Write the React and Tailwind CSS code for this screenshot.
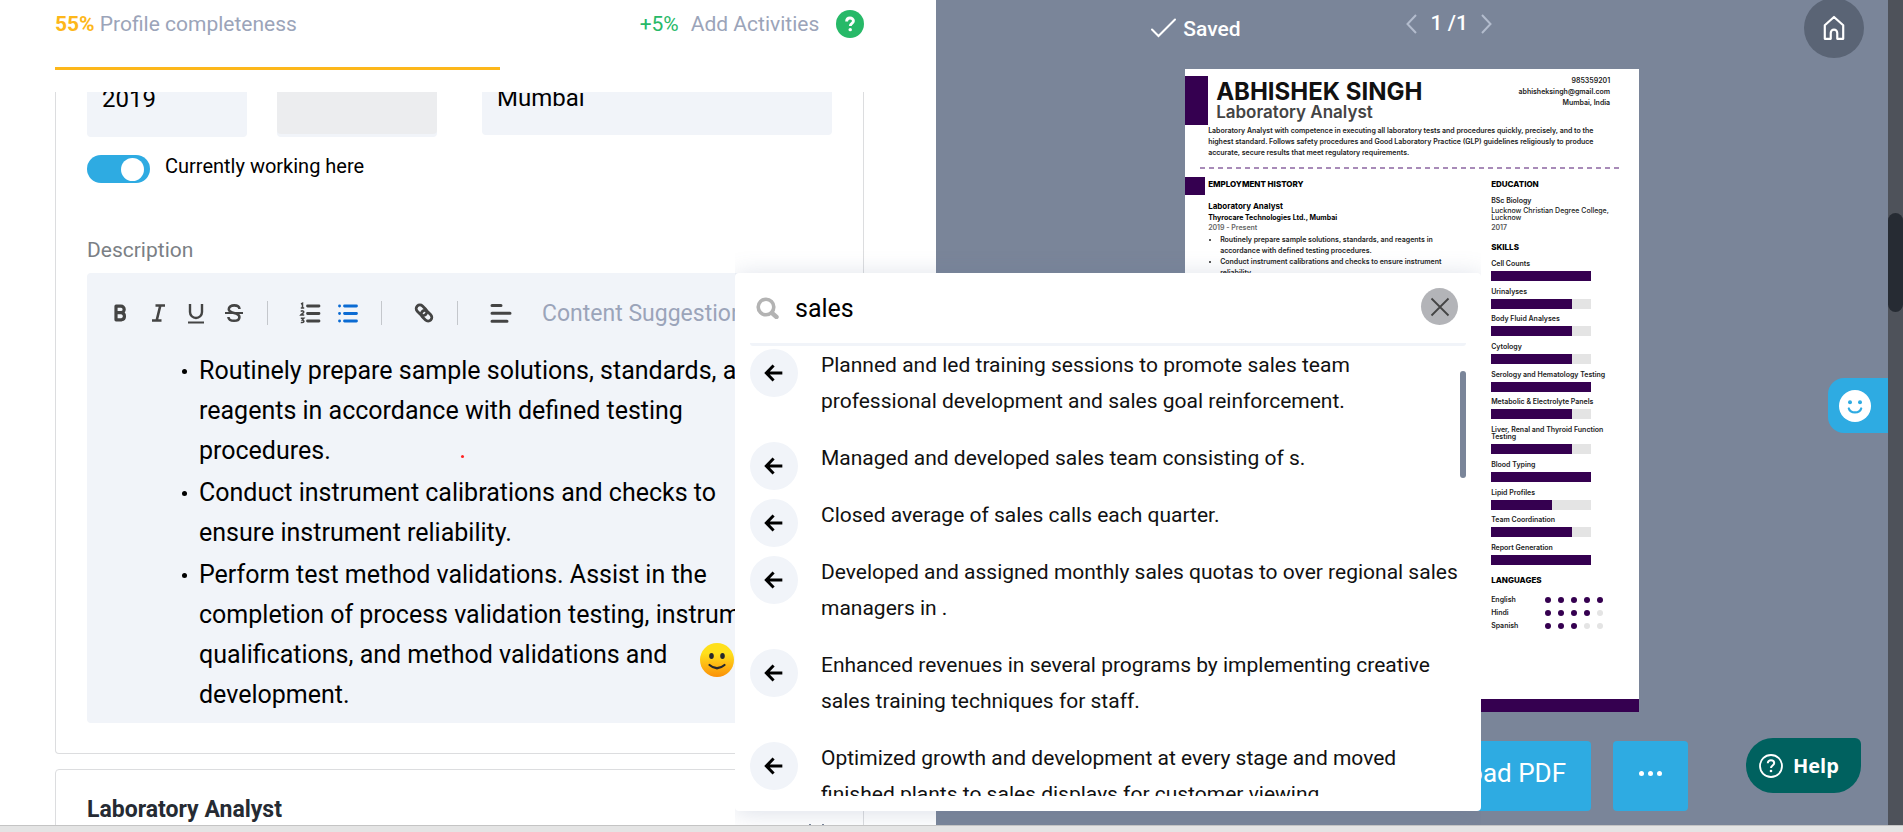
import { useState } from "react";

const skills = [
  { name: "Cell Counts", level: 100 },
  { name: "Urinalyses", level: 81 },
  { name: "Body Fluid Analyses", level: 81 },
  { name: "Cytology", level: 81 },
  { name: "Serology and Hematology Testing", level: 100 },
  { name: "Metabolic & Electrolyte Panels", level: 81 },
  { name: "Liver, Renal and Thyroid Function\nTesting", level: 81 },
  { name: "Blood Typing", level: 100 },
  { name: "Lipid Profiles", level: 61 },
  { name: "Team Coordination", level: 81 },
  { name: "Report Generation", level: 100 },
];

const languages = [
  { name: "English", dots: 5 },
  { name: "Hindi", dots: 4 },
  { name: "Spanish", dots: 3 },
];

const suggestions = [
  "Planned and led training sessions to promote sales team\nprofessional development and sales goal reinforcement.",
  "Managed and developed sales team consisting of s.",
  "Closed average of sales calls each quarter.",
  "Developed and assigned monthly sales quotas to over regional sales\nmanagers in .",
  "Enhanced revenues in several programs by implementing creative\nsales training techniques for staff.",
  "Optimized growth and development at every stage and moved\nfinished plants to sales displays for customer viewing.",
];

const duties = [
  "Routinely prepare sample solutions, standards, and\nreagents in accordance with defined testing\nprocedures.",
  "Conduct instrument calibrations and checks to\nensure instrument reliability.",
  "Perform test method validations. Assist in the\ncompletion of process validation testing, instrument\nqualifications, and method validations and\ndevelopment.",
];

const Icon = ({ size = 24, className = "", children, ...rest }) => (
  <svg width={size} height={size} viewBox="0 0 24 24" fill="none" stroke="currentColor" className={className} aria-hidden="true" {...rest}>
    {children}
  </svg>
);

const ToolButton = ({ label, active, children }) => (
  <button type="button" aria-label={label} className={`flex w-[38px] justify-center ${active ? "text-[#0b6bd3]" : "text-[#444]"}`}>
    <Icon>{children}</Icon>
  </button>
);

const Separator = () => <span className="ml-[14px] mr-[23px] h-6 w-px shrink-0 bg-[#c4c7cc]" />;

const Toolbar = () => (
  <div className="mt-7 flex h-6 items-center pl-[14px]">
    <ToolButton label="Bold">
      <path d="M8 5.200v13.600h5.600a3.700 3.700 0 0 0 0-7.200H8h5a3.200 3.200 0 0 0 0-6.400z" strokeWidth="3.200" strokeLinejoin="round" />
    </ToolButton>
    <ToolButton label="Italic">
      <path d="M9.500 4.500h9.500M6 19.500h9.500M14.200 5l-3.400 14" strokeWidth="2.600" />
    </ToolButton>
    <ToolButton label="Underline">
      <path d="M6 3v8a6 6 0 0 0 12 0v-8" strokeWidth="2.400" />
      <path d="M4 21.500h16" strokeWidth="1.800" />
    </ToolButton>
    <ToolButton label="Strike">
      <path d="M17.500 8c-.2-2.200-2.400-3.600-5.300-3.600S6.800 5.800 6.800 8.200c0 2.300 2.400 3 5.200 3.700s5.400 1.500 5.400 4-2.400 3.900-5.400 3.900-5.400-1.400-5.600-3.800" strokeWidth="2.600" />
      <path d="M3 12h18" strokeWidth="1.800" />
    </ToolButton>
    <Separator />
    <ToolButton label="Numbered list">
      <path d="M9.500 5h11.500M9.500 12.500h11.500M9.500 20h11.500" strokeWidth="2.800" strokeLinecap="round" />
      <path d="M3 3l1.500-.7V7M2.800 7h3.400M2.800 10.500c1-1 3-.8 3 .5 0 1-2 1.700-3 3h3.400M2.800 17.300h3l-1.500 1.800c2.600.2 2 3-1.500 2.400" strokeWidth="1.500" />
    </ToolButton>
    <ToolButton label="Bullet list" active>
      <path d="M8.500 5h12M8.500 12.500h12M8.500 20h12M3.500 5h.1M3.500 12.500h.1M3.500 20h.1" strokeWidth="2.800" strokeLinecap="round" />
    </ToolButton>
    <Separator />
    <ToolButton label="Link">
      <g strokeWidth="2.800">
        <rect x="3.500" y="5.500" width="12" height="7.400" rx="3.700" transform="rotate(45 9.500 9.200)" />
        <rect x="8.500" y="11" width="12" height="7.400" rx="3.700" transform="rotate(45 14.500 14.700)" />
      </g>
    </ToolButton>
    <Separator />
    <ToolButton label="Align">
      <path d="M4 4.500h9M4 12.300h18M4 20.300h15" strokeWidth="3" strokeLinecap="round" />
    </ToolButton>
    <button type="button" className="ml-[23px] whitespace-nowrap pt-[2px] text-[23px] leading-6 text-[#9ba4b9]">Content Suggestions</button>
  </div>
);

const Emoji = () => (
  <svg width="34" height="34" viewBox="0 0 34 34" className="absolute right-[98px] bottom-[46px]" aria-hidden="true">
    <defs>
      <linearGradient id="face" x1="0" y1="0" x2="0" y2="1">
        <stop offset="0.3" stopColor="#ffe01c" />
        <stop offset="1" stopColor="#fb9009" />
      </linearGradient>
    </defs>
    <circle cx="17" cy="17" r="17" fill="url(#face)" />
    <ellipse cx="11.500" cy="13" rx="2.300" ry="3" fill="#26282c" />
    <ellipse cx="22.500" cy="13" rx="2.300" ry="3" fill="#26282c" />
    <path d="M9.500 22q7.500 6.500 15 0" stroke="#26282c" strokeWidth="2.200" fill="none" strokeLinecap="round" />
  </svg>
);

const Editor = () => {
  const [current, setCurrent] = useState(true);
  return (
    <section className="flex w-[49.2%] shrink-0 flex-col bg-white pl-[55px] pr-[72px]">
      <header className="h-[92px] shrink-0 pt-[10px]">
        <div className="flex h-7 items-center justify-between text-[21px] text-[#9ba4b9]">
          <p className="pt-[2px]"><b className="text-[#fdb71a]">55%</b> Profile completeness</p>
          <div className="flex items-center gap-[17px]">
            <p className="flex gap-3 pt-[2px]"><span className="text-[#27b968]">+5%</span> Add Activities</p>
            <button type="button" aria-label="About activities" className="flex size-7 items-center justify-center rounded-full bg-[#27b968] text-white">
              <Icon size={18}>
                <path d="M7.500 8.500C7.500 5.500 9.500 4 12 4s4.600 1.600 4.600 4c0 3.200-4.200 3-4.200 6.500" strokeWidth="3.800" />
                <circle cx="12.300" cy="19.500" r="2.300" fill="currentColor" stroke="none" />
              </Icon>
            </button>
          </div>
        </div>
        <div className="mt-[29px] h-[3px] w-[55%] bg-[#fdb71a]" />
      </header>

      <div className="min-h-0 flex-1 overflow-hidden">
        <div className="rounded-b border border-t-0 border-[#dcdddf] px-[31px] pb-[30px]">
          <div className="-mt-[31px] flex items-start">
            <input aria-label="Start year" defaultValue="2019" className="h-[76px] w-[160px] rounded bg-[#f1f4f9] px-[15px] text-[24px] text-black" />
            <div className="ml-[30px] h-[76px] w-[160px] rounded bg-[#f1f4f9]">
              <input aria-label="End year" disabled className="h-[73px] w-full rounded bg-[#ecedef]" />
            </div>
            <input aria-label="City" defaultValue="Mumbai" className="ml-[45px] h-[74px] min-w-0 flex-1 rounded bg-[#f1f4f9] px-[15px] text-[24px] text-black" />
          </div>

          <label className="mt-[18px] flex items-start gap-[15px] text-[20px] leading-[22px] text-black">
            <input
              type="checkbox"
              checked={current}
              onChange={(e) => setCurrent(e.target.checked)}
              className="flex h-7 w-[63px] appearance-none items-center rounded-full bg-[#2eabe2] px-[6px] before:size-[23px] before:rounded-full before:bg-white checked:justify-end"
            />
            Currently working here
          </label>

          <p className="mt-7 pt-7 text-[21px] leading-[22px] text-[#7b7f85]">Description</p>
          <div className="relative mt-3 overflow-hidden rounded bg-[#f1f4f9] pb-2">
            <Toolbar />
            <ul className="mt-[26px] flex flex-col gap-[2px] pl-[95px] text-[25px] leading-10 text-black">
              {duties.map((d) => (
                <li key={d} className="flex gap-[12px]">
                  <span className="mt-[18px] size-[5px] shrink-0 rounded-full bg-black" />
                  <span className="whitespace-pre">{d}</span>
                </li>
              ))}
            </ul>
            <span className="absolute left-[374px] top-[182px] size-[3px] rounded-full bg-[#f22]" />
            <Emoji />
          </div>
        </div>

        <div className="mt-[15px] flex h-[120px] items-start justify-between rounded-t border border-[#dcdddf] px-[31px] pt-[29px]">
          <h2 className="text-[23px] font-bold leading-[22px] text-[#262b33]">Laboratory Analyst</h2>
          <button type="button" aria-label="Expand" className="pt-6 text-[#7a8599]">
            <svg width="24" height="16" viewBox="0 0 24 16" fill="none" stroke="currentColor" strokeWidth="2" aria-hidden="true">
              <path d="M2 1v14M15 1v14" />
            </svg>
          </button>
        </div>
      </div>
    </section>
  );
};

const ResumeHeading = ({ children }) => <h3 className="text-[8px] font-extrabold leading-[10px] text-black">{children}</h3>;

const Resume = () => (
  <article className="mx-auto flex h-[643px] w-[454px] shrink-0 flex-col bg-white font-[Inter,sans-serif] text-[7px] font-semibold text-[#222]">
    <div className="flex items-start pt-[6px]">
      <div className="mt-px h-[49px] w-[23px] bg-[#350050]" />
      <div className="ml-2 mt-[5px]">
        <h1 className="text-[24px] font-bold leading-6 text-[#111]">ABHISHEK SINGH</h1>
        <p className="text-[17px] font-semibold leading-4 text-[#444]">Laboratory Analyst</p>
      </div>
      <address className="ml-auto mr-[29px] text-right not-italic leading-[11px]">
        <p>985359201</p>
        <p>abhisheksingh@gmail.com</p>
        <p>Mumbai, India</p>
      </address>
    </div>
    <p className="whitespace-pre pl-[23px] leading-[11px]">
      {"Laboratory Analyst with competence in executing all laboratory tests and procedures quickly, precisely, and to the\nhighest standard. Follows safety procedures and Good Laboratory Practice (GLP) guidelines religiously to produce\naccurate, secure results that meet regulatory requirements."}
    </p>
    <div className="ml-[15px] mr-[19px] mt-[9px] h-[2px] shrink-0 bg-[repeating-linear-gradient(90deg,#a88bb8_0_5px,transparent_5px_9px)]" />

    <div className="flex">
      <div className="w-[306px] pt-2">
        <div className="flex">
          <div className="h-[18px] w-5 bg-[#350050]" />
          <div className="ml-[3px] pt-[2px]"><ResumeHeading>EMPLOYMENT HISTORY</ResumeHeading></div>
        </div>
        <div className="mt-[6px] pl-[23px]">
          <p className="text-[8px] font-bold leading-[11px] text-black">Laboratory Analyst</p>
          <p className="font-bold leading-[11px] text-black">Thyrocare Technologies Ltd., Mumbai</p>
          <p className="leading-[9px] text-[#666]">2019 - Present</p>
          <ul className="mt-[2px] list-disc whitespace-pre pl-3 leading-[11px]">
            <li>{"Routinely prepare sample solutions, standards, and reagents in\naccordance with defined testing procedures."}</li>
            <li>{"Conduct instrument calibrations and checks to ensure instrument\nreliability."}</li>
          </ul>
        </div>
      </div>
      <div className="pt-[10px]">
        <ResumeHeading>EDUCATION</ResumeHeading>
        <p className="mt-2 leading-2">BSc Biology</p>
        <p className="mt-[2px] whitespace-pre font-medium leading-[7px]">{"Lucknow Christian Degree College,\nLucknow"}</p>
        <p className="mb-[10px] mt-[3px] leading-2 text-[#555]">2017</p>
        <ResumeHeading>SKILLS</ResumeHeading>
        <div className="mb-[10px] mt-2 flex h-[305px] flex-col justify-between">
          {skills.map((s) => (
            <div key={s.name}>
              <p className="mb-1 whitespace-pre leading-[7px]">{s.name}</p>
              <div className="h-[10px] w-[100px] bg-[#e4e4e4]">
                <div className="h-full bg-[#350050]" style={{ width: `${s.level}%` }} />
              </div>
            </div>
          ))}
        </div>
        <ResumeHeading>LANGUAGES</ResumeHeading>
        <div className="mt-2">
          {languages.map((l) => (
            <div key={l.name} className="flex h-[13px] items-center gap-[7px]">
              <span className="w-[47px] pt-[2px]">{l.name}</span>
              {[1, 2, 3, 4, 5].map((n) => (
                <span key={n} className={`size-[6px] rounded-full ${n <= l.dots ? "bg-[#350050]" : "bg-[#e4e4e4]"}`} />
              ))}
            </div>
          ))}
        </div>
      </div>
    </div>
    <div className="mt-auto h-[13px] bg-[#350050]" />
  </article>
);

const Preview = () => (
  <section className="relative flex min-w-0 flex-1 flex-col bg-[#7a8599] text-white">
    <div className="mb-[13px] flex h-14 shrink-0 items-center pl-[215px] pr-6 text-[21px] font-medium">
      <svg width="25" height="20" viewBox="0 0 25 20" fill="none" stroke="currentColor" strokeWidth="2" strokeLinecap="round" aria-hidden="true">
        <path d="M1 11.500L7.500 18 24 1.500" />
      </svg>
      <span className="ml-[7px] w-[56px] pt-[3px]">Saved</span>
      <div className="ml-[167px] flex items-center pb-[9px]">
        <button type="button" aria-label="Previous page" className="text-[#b3bccd]">
          <svg width="11" height="20" viewBox="0 0 11 20" fill="none" stroke="currentColor" strokeWidth="2"><path d="M10 1L1.500 10 10 19" /></svg>
        </button>
        <span className="w-[64px] text-center">1 /1</span>
        <button type="button" aria-label="Next page" className="text-[#b3bccd]">
          <svg width="11" height="20" viewBox="0 0 11 20" fill="none" stroke="currentColor" strokeWidth="2"><path d="M1 1l8.500 9L1 19" /></svg>
        </button>
      </div>
      <a href="#home" aria-label="Home" className="ml-auto flex size-[60px] shrink-0 items-center justify-center rounded-full bg-[#5a6475]">
        <Icon size={26} strokeWidth="2" strokeLinejoin="round">
          <path d="M3.500 9.500L12 1.800l8.500 7.700V22H15v-5.500a3 3 0 0 0-6 0V22H3.500z" />
        </Icon>
      </a>
    </div>

    <Resume />

    <div className="mt-[29px] flex h-[70px] shrink-0 justify-end gap-[22px] pr-[200px]">
      <button type="button" className="rounded bg-[#2eabe2] px-[25px] pb-[6px] text-[26px]">Download PDF</button>
      <button type="button" aria-label="More" className="flex w-[75px] items-center justify-center gap-1 rounded bg-[#2eabe2] pb-[6px]">
        <span className="size-[5px] rounded-full bg-white" />
        <span className="size-[5px] rounded-full bg-white" />
        <span className="size-[5px] rounded-full bg-white" />
      </button>
    </div>

    <button type="button" aria-label="Feedback" className="absolute right-0 top-[378px] flex h-[55px] w-[60px] items-center rounded-l-2xl bg-[#2eabe2] pl-[11px]">
      <svg width="32" height="32" viewBox="0 0 32 32" aria-hidden="true">
        <circle cx="16" cy="16" r="16" fill="#fff" />
        <circle cx="11" cy="12.300" r="2" fill="#2eabe2" />
        <circle cx="21" cy="12.300" r="2" fill="#2eabe2" />
        <path d="M9.800 18.500c1.500 5.200 10.900 5.200 12.400 0" fill="none" stroke="#2eabe2" strokeWidth="2.200" strokeLinecap="round" />
      </svg>
    </button>

    <button type="button" className="absolute bottom-8 right-[27px] flex h-[55px] w-[115px] items-center gap-[10px] rounded-[27px] rounded-tr-[6px] bg-[#00615f] pl-[13px] font-['Open_Sans',sans-serif] text-[20px] font-bold">
      <Icon size={24}>
        <circle cx="12" cy="12" r="11" strokeWidth="1.800" />
        <path d="M8.800 9.300c0-1.900 1.400-3 3.200-3s3.200 1.100 3.200 2.800c0 2.400-3.200 2.500-3.200 4.900" strokeWidth="2" />
        <circle cx="12" cy="17" r="1.300" fill="currentColor" stroke="none" />
      </Icon>
      Help
    </button>
  </section>
);

const SuggestionPopup = () => {
  const [query, setQuery] = useState("sales");
  return (
    <div role="dialog" aria-label="Content suggestions" className="absolute left-[735px] top-[273px] w-[746px] rounded bg-white pb-[15px] pl-[15px] pr-[15px] shadow-[0_2px_24px_rgba(90,110,150,0.22)] [clip-path:inset(-30px_0)]">
      <div className="flex h-[70px] items-center pb-[3px] pl-[6px] pr-2">
        <Icon size={24} className="text-[#b3b3b3]">
          <circle cx="10" cy="12" r="7.800" strokeWidth="3.600" />
          <path d="M16 18l4.500 4" strokeWidth="4.400" strokeLinecap="round" />
        </Icon>
        <input aria-label="Search suggestions" value={query} onChange={(e) => setQuery(e.target.value)} className="ml-[15px] min-w-0 flex-1 pt-[5px] text-[25px] text-black outline-none" />
        <button type="button" aria-label="Close" className="flex size-[37px] items-center justify-center rounded-full bg-[#b3b4b8] text-[#444]">
          <Icon size={24}><path d="M3.500 3.500l17 17M20.500 3.500l-17 17" strokeWidth="1.800" /></Icon>
        </button>
      </div>
      <div className="h-[3px] rounded-b bg-[#f1f4f9]" />
      <ul className="h-[450px] overflow-hidden pt-px">
        {suggestions.map((s) => (
          <li key={s} className="flex items-start gap-[23px] pb-[21px]">
            <button type="button" aria-label="Insert suggestion" className="-mb-4 mt-[2px] flex size-12 shrink-0 items-center justify-center rounded-full bg-[#f1f4f9] text-black">
              <Icon size={20}><path d="M22 12H3.500M11.500 3L2.800 12l8.700 9" strokeWidth="3.600" /></Icon>
            </button>
            <p className="whitespace-pre text-[21px] leading-9 text-[#111]">{s}</p>
          </li>
        ))}
      </ul>
      <span className="absolute right-[15px] top-[98px] h-[107px] w-[6px] rounded-full bg-[#7a8599]" />
    </div>
  );
};

const App = () => (
  <div className="relative flex h-screen flex-col overflow-hidden font-[Roboto,sans-serif]">
    <main className="flex min-h-0 flex-1 overflow-hidden">
      <Editor />
      <Preview />
      <div className="w-[15px] shrink-0 bg-[#4e525a] pt-[213px]">
        <div className="h-[99px] rounded-full bg-[#262b33]" />
      </div>
    </main>
    <SuggestionPopup />
    <div className="relative h-[7px] shrink-0 border-t border-[#c4c4c4] bg-[#e4e4e4]" />
  </div>
);

export default App;
